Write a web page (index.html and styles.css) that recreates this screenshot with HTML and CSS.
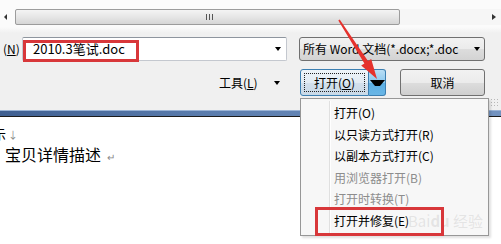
FILE: index.html
```html
<!DOCTYPE html>
<html lang="zh-CN">
<head>
    <meta charset="UTF-8">
    <title>打开文件</title>
    <link rel="stylesheet" href="styles.css">
</head>
<body>
    <div class="page">
        <div class="dialog">
            <!-- horizontal scrollbar of the file list -->
            <div class="hscroll">
                <span class="sc-left"><i class="tri-left"></i></span>
                <div class="sc-track">
                    <div class="sc-thumb"><span class="grip"></span></div>
                </div>
                <span class="sc-right"><i class="tri-right"></i></span>
            </div>

            <div class="name-row">
                <span class="lbl">(<u>N</u>)</span>
                <div class="name-box">
                    <span class="fname">2010.3笔试.doc</span>
                    <i class="dd"></i>
                </div>
                <div class="type-box">
                    <span class="type-text">所有 Word 文档(*.docx;*.doc</span>
                    <i class="dd"></i>
                </div>
            </div>

            <div class="btn-row">
                <span class="tools">工具(<u>L</u>)</span>
                <i class="dd"></i>
                <div class="split">
                    <span class="split-main"><span class="focus">打开(<u>O</u>)</span></span>
                    <span class="split-arrow"><i class="dd big"></i></span>
                </div>
                <button class="btn">取消</button>
            </div>
            <span class="resize-grip"></span>
        </div>

        <div class="band"></div>

        <div class="doc">
            <p class="line cut">示<span class="mark">↓</span></p>
            <p class="line big">宝贝详情描述 <span class="mark">↵</span></p>
        </div>

        <ul class="menu">
            <li>打开(O)</li>
            <li>以只读方式打开(R)</li>
            <li>以副本方式打开(C)</li>
            <li class="off">用浏览器打开(B)</li>
            <li class="off">打开时转换(T)</li>
            <li>打开并修复(E)</li>
        </ul>

        <div class="watermark">Bai<b>du</b> 经验</div>

        <!-- red annotations drawn over the screenshot -->
        <div class="hl hl-name"></div>
        <div class="hl hl-repair"></div>
        <svg class="arrow" viewBox="0 0 501 244" width="501" height="244">
            <polygon points="339.7,19.6 368,61 371.2,59 377,79 361.2,65.4 364.4,63.4 338.3,20.4" fill="#e5322d"/>
        </svg>
    </div>
</body>
</html>
```

FILE: styles.css
```css
* {
    box-sizing: border-box;
}
body {
    margin: 0;
    background: #fff;
    font-family: "Noto Sans CJK SC", "Noto Sans", sans-serif;
    font-size: 12px;
    color: #000;
}
.page {
    position: relative;
    width: 501px;
    height: 244px;
    overflow: hidden;
    background: #fff;
}
.dialog {
    position: relative;
    height: 110px;
    padding-top: 9px;
    background: linear-gradient(#fbfbfb 0, #fbfbfb 27px, #f0f0f0 33px);
}

/* scrollbar */
.hscroll {
    display: flex;
    height: 16px;
}
.sc-left {
    width: 15px;
    display: flex;
    align-items: center;
    padding-left: 4px;
}
.tri-left {
    width: 0;
    height: 0;
    border-top: 3px solid transparent;
    border-bottom: 3px solid transparent;
    border-right: 3px solid #333;
}
.sc-track {
    flex: 1;
    background: #f6f6f6;
}
.sc-thumb {
    width: 385px;
    height: 16px;
    border: 1px solid #9c9c9c;
    border-radius: 2px;
    background: linear-gradient(#f4f4f4, #e6e6e6 50%, #d6d6d6);
    display: flex;
    justify-content: center;
    align-items: center;
    padding-left: 4px;
}
.grip {
    width: 7px;
    height: 6px;
    background: repeating-linear-gradient(90deg, #555 0, #555 1px, transparent 1px, transparent 3px);
}
.sc-right {
    width: 13px;
    display: flex;
    align-items: center;
    justify-content: flex-end;
    padding-right: 5px;
    background: #f6f6f6;
}
.tri-right {
    width: 0;
    height: 0;
    border-top: 3.5px solid transparent;
    border-bottom: 3.5px solid transparent;
    border-left: 4px solid #333;
}

/* file name row */
.name-row {
    display: flex;
    align-items: center;
    height: 24px;
    margin-top: 12px;
}
.lbl {
    width: 22px;
    padding-left: 3px;
    line-height: 16px;
}
.name-box {
    width: 265px;
    height: 24px;
    background: #fff;
    border: 1px solid #c4c8cf;
    border-top-color: #8e959e;
    border-radius: 2px;
    display: flex;
    align-items: center;
    justify-content: space-between;
    padding: 0 5px 0 10px;
}
.fname {
    font-size: 13px;
    line-height: 16px;
}
.dd {
    display: inline-block;
    flex: none;
    width: 0;
    height: 0;
    border-top: 4px solid #000;
    border-left: 3.5px solid transparent;
    border-right: 3.5px solid transparent;
}
.dd.big {
    border-top-width: 6px;
    border-left-width: 5px;
    border-right-width: 5px;
}
.type-box {
    width: 186px;
    height: 24px;
    margin-left: 12px;
    border: 1px solid #707070;
    border-radius: 3px;
    background: linear-gradient(#f2f2f2, #ebebeb 50%, #dddddd 51%, #d3d3d3);
    display: flex;
    align-items: center;
    padding: 0 4px 0 3px;
    gap: 4px;
}
.type-text {
    flex: 1;
    white-space: nowrap;
    overflow: hidden;
    line-height: 16px;
}

/* button row */
.btn-row {
    display: flex;
    align-items: center;
    height: 27px;
    margin-top: 8px;
    padding-left: 219px;
}
.tools {
    width: 55px;
    white-space: nowrap;
    line-height: 16px;
}
.split {
    display: flex;
    margin-left: 20px;
    height: 27px;
}
.split-main {
    width: 69px;
    border: 1px solid #3c7fb1;
    border-radius: 3px 0 0 3px;
    background: linear-gradient(#eef4f9, #e2ebf3 50%, #d3e0ec 51%, #c9d9e7);
    padding: 3px;
    display: flex;
}
.focus {
    flex: 1;
    border: 1px dotted #222;
    display: flex;
    align-items: center;
    justify-content: center;
    line-height: 16px;
}
.split-arrow {
    width: 17px;
    border: 1px solid #3c7fb1;
    border-left: none;
    border-radius: 0 3px 3px 0;
    background: linear-gradient(#b9def5, #8cc8ee 50%, #5aaee3 51%, #6ab6e6);
    display: flex;
    align-items: center;
    justify-content: center;
}
.btn {
    width: 85px;
    height: 27px;
    margin-left: 14px;
    border: 1px solid #707070;
    border-radius: 3px;
    background: linear-gradient(#f2f2f2, #ebebeb 50%, #dddddd 51%, #cfcfcf);
    font-family: inherit;
    font-size: 12px;
    line-height: 16px;
    padding: 0;
}
.resize-grip {
    position: absolute;
    right: 3px;
    bottom: 4px;
    width: 8px;
    height: 8px;
    background: radial-gradient(circle, #b8b8b8 0.8px, transparent 1px) 0 0 / 3px 3px;
}

/* word window behind */
.band {
    height: 7px;
    background: linear-gradient(90deg, #3f5f91, #5a7cad 40%, #7393c0);
    border-top: 1px solid #9bb4d6;
    border-bottom: 1px solid #1c1c1c;
}
.doc {
    padding-top: 8px;
}
.line {
    margin: 0;
    white-space: nowrap;
}
.cut {
    font-size: 13px;
    line-height: 18px;
    margin-left: -7px;
}
.big {
    font-size: 16px;
    line-height: 20px;
    padding-left: 5px;
}
.mark {
    color: #888;
    font-size: 10px;
    margin-left: 2px;
}

/* drop-down menu */
.menu {
    position: absolute;
    left: 300px;
    top: 98px;
    width: 189px;
    height: 138px;
    margin: 0;
    padding: 3px 0 0 0;
    list-style: none;
    background: #f7f7f7;
    border: 1px solid #979797;
    box-shadow: 2px 2px 2px rgba(0, 0, 0, 0.12);
}
.menu::before {
    content: "";
    position: absolute;
    left: 28px;
    top: 2px;
    bottom: 2px;
    width: 1px;
    background: #e0e0e0;
    border-right: 1px solid #fff;
}
.menu li {
    height: 21.6px;
    line-height: 21.6px;
    padding-left: 33px;
}
.menu li.off {
    color: #8d8d8d;
}

/* faint site watermark over the menu */
.watermark {
    position: absolute;
    left: 408px;
    top: 210px;
    font-size: 15px;
    color: rgba(150, 150, 150, 0.2);
    white-space: nowrap;
    pointer-events: none;
}
.watermark b {
    font-weight: bold;
}

/* annotations */
.hl {
    position: absolute;
    border: 3px solid #d8373a;
}
.hl-name {
    left: 23px;
    top: 40px;
    width: 116px;
    height: 22px;
}
.hl-repair {
    left: 315px;
    top: 207px;
    width: 129px;
    height: 29px;
}
.arrow {
    position: absolute;
    left: 0;
    top: 0;
    pointer-events: none;
}
```
